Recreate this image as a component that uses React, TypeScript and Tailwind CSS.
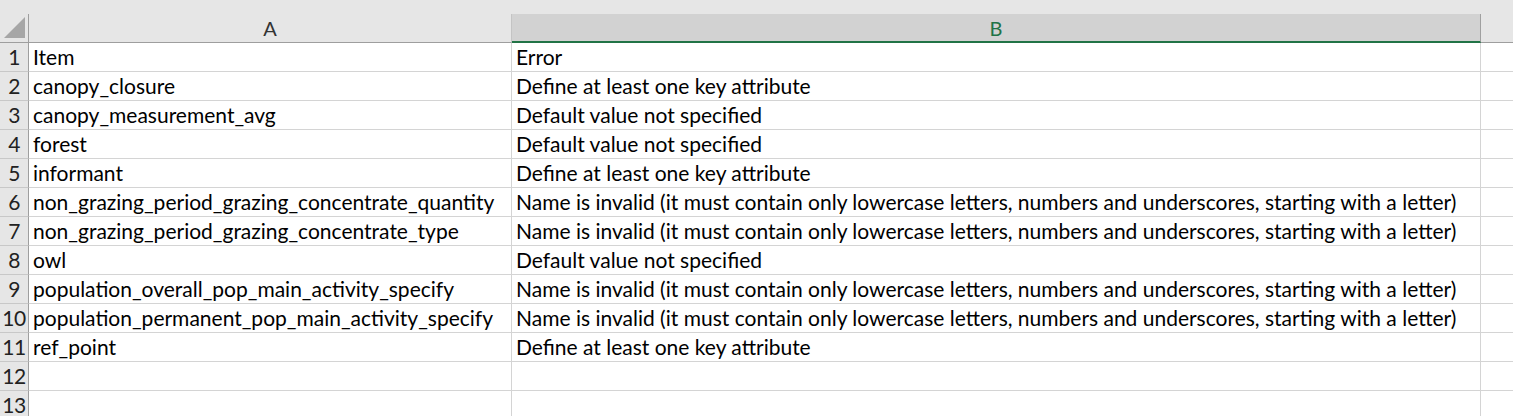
import React from 'react';

const rows: [string, string][] = [
  ['Item', 'Error'],
  ['canopy_closure', 'Define at least one key attribute'],
  ['canopy_measurement_avg', 'Default value not specified'],
  ['forest', 'Default value not specified'],
  ['informant', 'Define at least one key attribute'],
  ['non_grazing_period_grazing_concentrate_quantity', 'Name is invalid (it must contain only lowercase letters, numbers and underscores, starting with a letter)'],
  ['non_grazing_period_grazing_concentrate_type', 'Name is invalid (it must contain only lowercase letters, numbers and underscores, starting with a letter)'],
  ['owl', 'Default value not specified'],
  ['population_overall_pop_main_activity_specify', 'Name is invalid (it must contain only lowercase letters, numbers and underscores, starting with a letter)'],
  ['population_permanent_pop_main_activity_specify', 'Name is invalid (it must contain only lowercase letters, numbers and underscores, starting with a letter)'],
  ['ref_point', 'Define at least one key attribute'],
  ['', ''],
  ['', ''],
];

const font = { fontFamily: 'Lato, "Open Sans", sans-serif' };

export default function App() {
  return (
    <div className="w-[1513px] h-[416px] overflow-hidden bg-white text-[21px] text-black" style={font}>
      <div className="h-[14px] bg-[#e6e6e6]" />
      <div className="grid grid-cols-[29px_483px_969px_1fr]">
        {/* header row */}
        <div className="h-[29px] bg-[#e6e6e6] border-r border-b border-[#9e9e9e] relative">
          <svg width="29" height="28" className="absolute left-0 top-0">
            <polygon points="4,24 25,24 25,3" fill="#a6a6a6" />
          </svg>
        </div>
        <div className="h-[29px] bg-[#e6e6e6] border-r border-r-[#c4c4c4] border-b border-b-[#9e9e9e] flex items-center justify-center text-[20px] text-[#333]">A</div>
        <div className="h-[29px] bg-[#d2d2d2] border-r border-r-[#a0a0a0] border-b-2 border-b-[#217346] flex items-center justify-center text-[20px] text-[#217346]">B</div>
        <div className="h-[29px] bg-[#e6e6e6] border-b border-[#9e9e9e]" />

        {rows.map((r, i) => (
          <React.Fragment key={i}>
            <div className="h-[29px] bg-[#e6e6e6] border-r border-r-[#9e9e9e] border-b border-b-[#c8c8c8] flex items-center justify-center text-[#222] tracking-[-0.5px]">
              {i + 1}
            </div>
            <div className="h-[29px] border-r border-b border-[#d4d4d4] flex items-center pl-[4px] whitespace-nowrap overflow-hidden">
              {r[0]}
            </div>
            <div className="h-[29px] border-r border-b border-[#d4d4d4] flex items-center pl-[4px] whitespace-nowrap overflow-hidden">
              {r[1]}
            </div>
            <div className="h-[29px] border-b border-[#d4d4d4]" />
          </React.Fragment>
        ))}
      </div>
    </div>
  );
}
